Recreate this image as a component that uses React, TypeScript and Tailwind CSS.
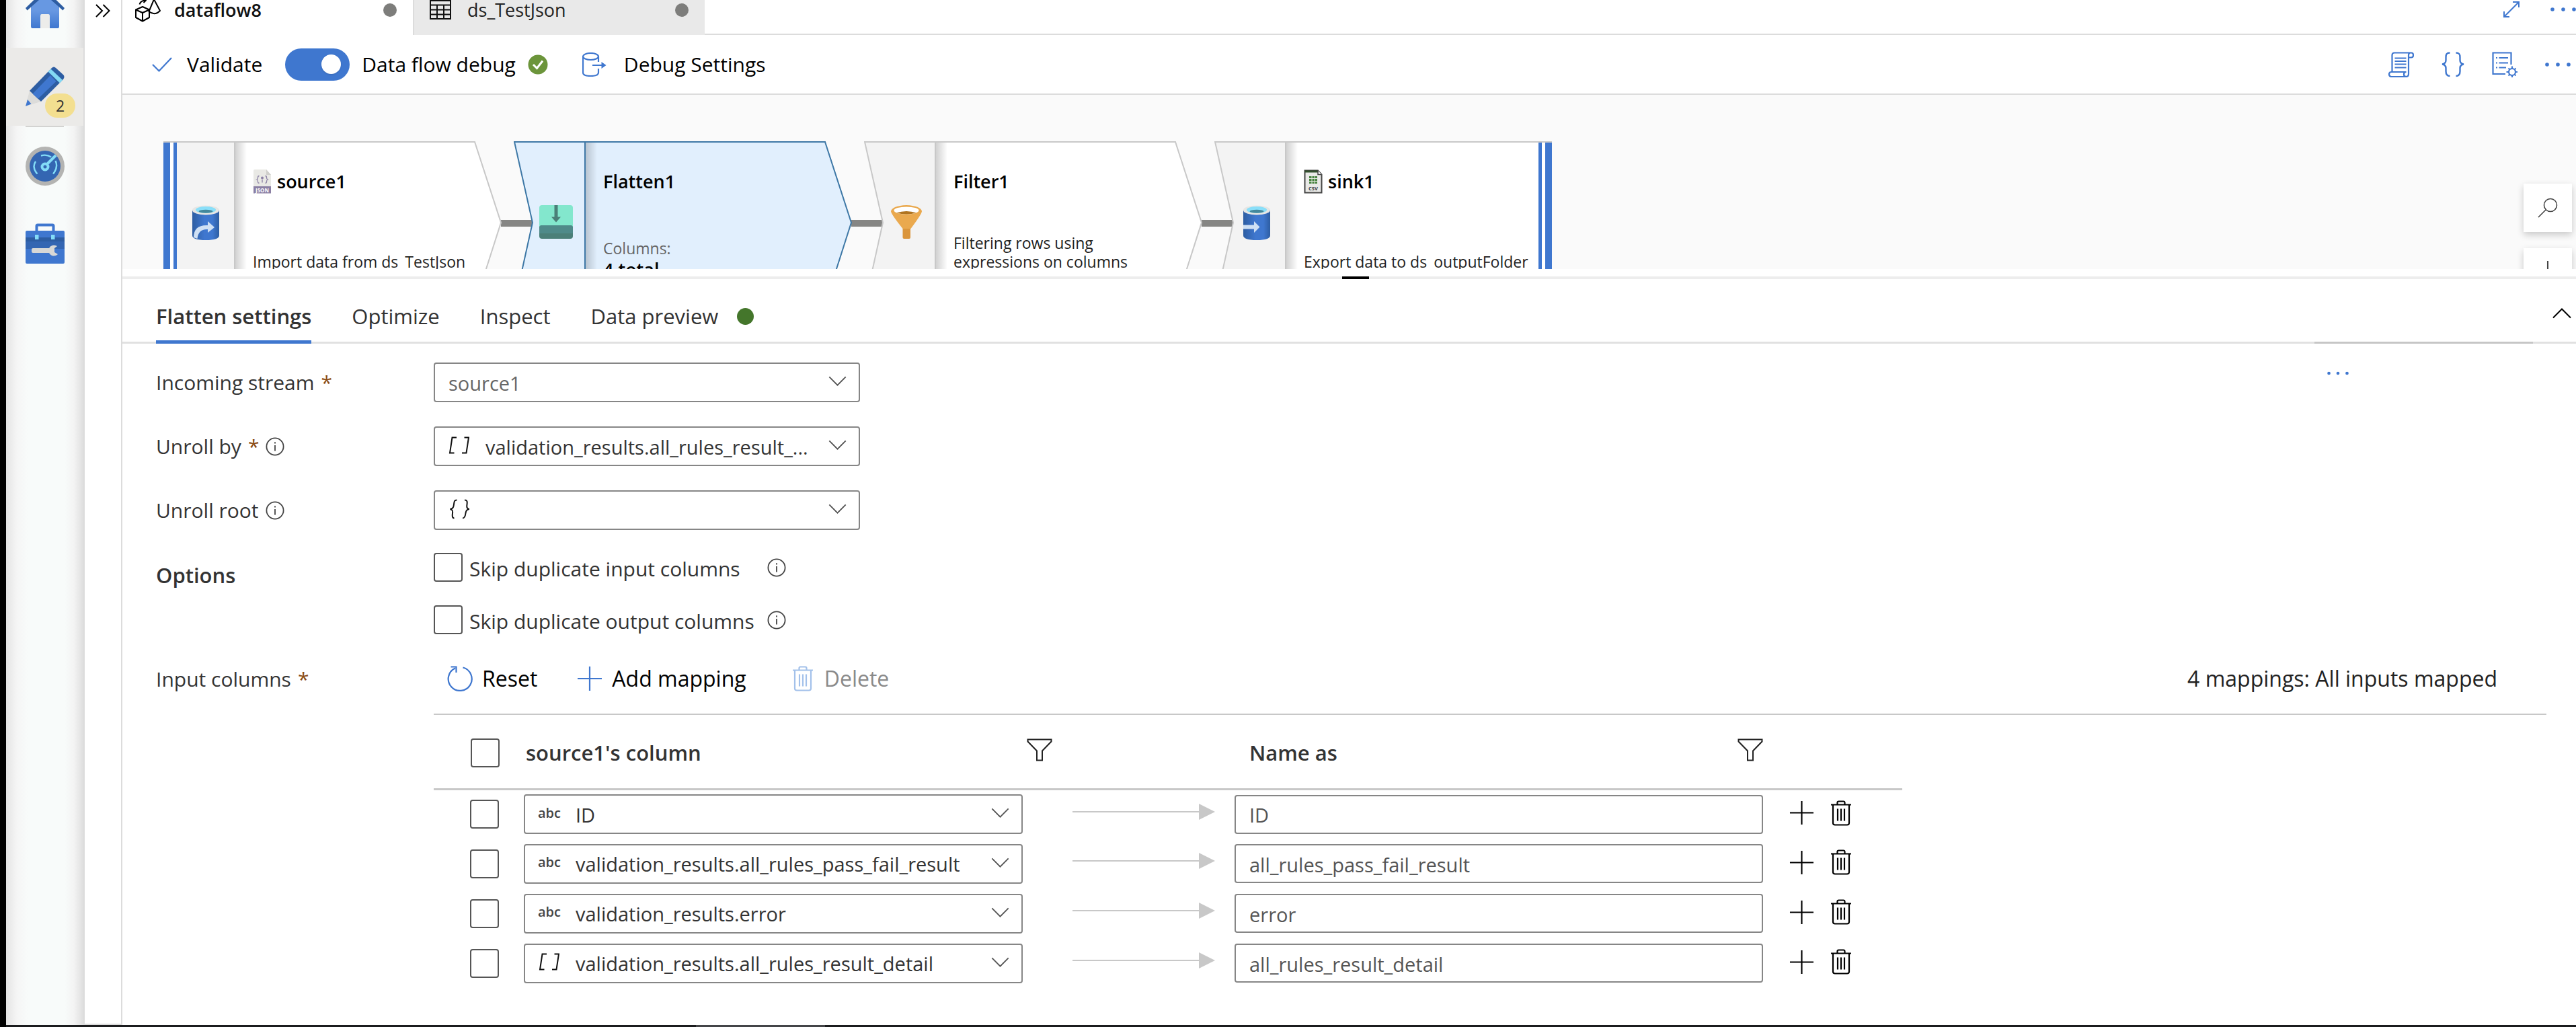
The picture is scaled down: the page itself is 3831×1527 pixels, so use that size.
import React from "react";

type IconProps = { className?: string };

/* ---------- line icons ---------- */

const Dots = ({ className = "w-[38px] h-2" }: IconProps) => (
  <svg viewBox="0 0 38 8" className={className} fill="#3f77cf" aria-hidden>
    <circle cx="3" cy="4" r="2.8" />
    <circle cx="19" cy="4" r="2.8" />
    <circle cx="35" cy="4" r="2.8" />
  </svg>
);

const Chevron = ({ className = "" }: IconProps) => (
  <svg viewBox="0 0 28 16" className={className} fill="none" stroke="currentColor" strokeWidth="2" aria-hidden>
    <path d="M1 1.5 14 14.5 27 1.5" />
  </svg>
);

const Info = () => (
  <svg viewBox="0 0 28 28" className="h-7 w-7 shrink-0" fill="none" stroke="#444" strokeWidth="1.8" aria-hidden>
    <circle cx="14" cy="14" r="12.6" />
    <path d="M14 12v8.5M14 7.2v2.4" />
  </svg>
);

const Plus = ({ className = "" }: IconProps) => (
  <svg viewBox="0 0 38 38" className={className} fill="none" stroke="currentColor" strokeWidth="2.2" aria-hidden>
    <path d="M19 1v36M1 19h36" />
  </svg>
);

const Trash = ({ className = "" }: IconProps) => (
  <svg viewBox="0 0 32 38" className={className} fill="none" stroke="currentColor" strokeWidth="2.2" aria-hidden>
    <path d="M1 6.5h30M10.500 6V3.500Q10.500 1.500 12.500 1.500h7Q21.500 1.500 21.500 3.500V6M4 6.500V33.500Q4 36.500 7 36.500H25Q28 36.500 28 33.500V6.500M11 12.500v18M16 12.500v18M21 12.500v18" />
  </svg>
);

const Funnel = () => (
  <svg viewBox="0 0 38 34" className="h-[34px] w-[38px]" fill="none" stroke="#222" strokeWidth="2" aria-hidden>
    <path d="M1.500 1.500H36.500V4.500L23 18.500V32.500H15V18.500L1.500 4.500Z" />
  </svg>
);

const Brackets = () => (
  <svg viewBox="0 0 32 26" className="h-[26px] w-8" fill="none" stroke="#111" strokeWidth="2" aria-hidden>
    <path d="M13 1.500H6.500L3 24.500H9.500M24.500 1.500H31L27.500 24.500H21" />
  </svg>
);

const BracesItalic = () => (
  <svg viewBox="0 0 32 30" className="h-[30px] w-8" fill="none" stroke="#111" strokeWidth="2" aria-hidden>
    <path d="M13.500 1.500C9.500 1.500 9.500 4 9 8 8.500 12 8 14 3.500 15 7.500 16 7.500 18 7 21 6.500 25 6.500 28.500 9.500 28.500M25 1.500C29 1.500 29 4 28.500 8 28 12 28 14 31.500 15 27.500 16 27 18 26.500 21 26 25 25 28.500 22 28.500" />
  </svg>
);

const Braces = () => (
  <svg viewBox="0 0 34 38" className="h-[38px] w-[34px]" fill="none" stroke="#3f77cf" strokeWidth="2.4" aria-hidden>
    <path d="M12.500 1.500C7.500 1.500 6.500 4 6.500 8v4.500C6.500 16 5 18 1 18.500 5 19 6.500 21 6.500 24.500V29C6.500 33 7.500 36 12.500 36M21.500 1.500C26.500 1.500 27.500 4 27.500 8v4.500C27.500 16 29 18 33 18.500 29 19 27.500 21 27.500 24.500V29C27.500 33 26.500 36 21.500 36" />
  </svg>
);

const Script = () => (
  <svg viewBox="0 0 38 38" className="h-[38px] w-[38px]" fill="none" stroke="#3f77cf" strokeWidth="2.2" aria-hidden>
    <path d="M5.500 29V5Q5.500 1.500 9 1.500H34Q37 1.500 37 5T34 8.500H30V5Q30 1.500 33 1.500M30 8V33Q30 37 26 37H4.500Q1 37 1 33.500T4.500 30H26.500Q23 30 23 33.500T26.500 37" />
    <path d="M9.500 9.500h17M9.500 14h17M9.500 18.500h17M9.500 23.500h17" strokeWidth="2" />
  </svg>
);

const ListGear = () => (
  <svg viewBox="0 0 38 38" className="h-[38px] w-[38px]" fill="none" stroke="#3f77cf" strokeWidth="2.2" aria-hidden>
    <path d="M20 33H1.500V1.500H28.500V19M10.500 9H24M10.500 16.500H24M10.500 23.500H21M6 9h2M6 16.500h2M6 23.500h2" />
    <circle cx="30" cy="30" r="5" />
    <path d="M30 25V21.500M30 35v3M25 30h-3.500M35 30h3M26.500 26.500l-2-2M33.500 26.500l2-2M26.500 33.500l-2 2M33.500 33.500l2 2" />
  </svg>
);

const ResetIcon = () => (
  <svg viewBox="0 0 38 38" className="h-[38px] w-[38px]" fill="none" stroke="#3f77cf" strokeWidth="2.2" aria-hidden>
    <path d="M23.500 2.500A17.500 17.500 0 1 1 12 3.500M5.500 1.500H13.500V10" />
  </svg>
);

const DebugDb = () => (
  <svg viewBox="0 0 36 36" className="h-9 w-9" fill="none" stroke="#3f77cf" strokeWidth="2.2" aria-hidden>
    <ellipse cx="12.500" cy="6" rx="11.500" ry="5" />
    <path d="M1 6V30Q1 35 12.500 35T24 30V24M24 6V14M15 19H30" />
    <path d="M28.500 14 35.500 19 28.500 24Z" fill="#3f77cf" stroke="none" />
  </svg>
);

const DataflowIcon = () => (
  <svg viewBox="0 0 40 36" className="h-9 w-10" fill="none" stroke="#000" strokeWidth="2" strokeLinejoin="round" aria-hidden>
    <path d="M12 13 22 17.500V29L12 34.500 2 29V17.500ZM2 17.500 12 22 22 17.500M12 22V34.500M7.500 9.500Q9 4 16 3.500M13 .5 17 3.500 13.500 7M29 2 21.500 20Q30 27 38 19Z" />
  </svg>
);

const TableIcon = () => (
  <svg viewBox="0 0 32 30" className="h-[30px] w-8" fill="none" stroke="#111" strokeWidth="2" aria-hidden>
    <path d="M1 1H31V28H1ZM1 7.500H31M1 14.500H31M1 21.500H31M11 7.500V28M21 7.500V28" />
  </svg>
);

/* ---------- colour icons ---------- */

const Home = () => (
  <svg viewBox="0 0 60 60" className="h-[60px] w-[60px] shrink-0" aria-hidden>
    <defs>
      <linearGradient id="home" x1="0" y1="0" x2="0" y2="1">
        <stop offset=".5" stopColor="#6798e2" />
        <stop offset="1" stopColor="#3f77cf" />
      </linearGradient>
    </defs>
    <path d="M9 28 30 8 51 28V57Q51 60 49 60H11Q9 60 9 57Z" fill="url(#home)" />
    <path d="M30 2 59 30 56.500 33.500 30 10 3.500 33.500 1 30Z" fill="#2d5da2" />
    <path d="M23 42Q23 39 25 39H35Q37 39 37 42V60H23Z" fill="#ececea" />
  </svg>
);

const Pencil = () => (
  <svg viewBox="0 0 60 60" className="h-[60px] w-[60px]" aria-hidden>
    <path d="M7 37 24 53 1 60Z" fill="#dcdcda" />
    <path d="M4 50 9.500 56.500 1 60Z" fill="#3f77cf" />
    <path d="M7 37 40 3Q43 0 46 3L57 13Q60 16 57 20L24 53Z" fill="#2d5da2" />
    <path d="M11.500 41.500 38 14 46.500 23 19.500 49Z" fill="#3f77cf" />
    <path d="M34.500 8.500 38.500 4.500 56 21 52 25.500Z" fill="#83d9f4" />
  </svg>
);

const Gauge = () => (
  <svg viewBox="0 0 60 60" className="h-[60px] w-[60px]" aria-hidden>
    <circle cx="30" cy="30" r="29" fill="#b4b4b2" />
    <circle cx="30" cy="30" r="23" fill="#3466b2" />
    <g fill="none" stroke="#83dcf7">
      <path d="M16 23Q10 32 18.500 41.500M24 14.500Q32 12 39 16.500M45.500 22Q50 32 42 41.500" strokeWidth="2.400" />
      <path d="M33 27 46 14" strokeWidth="4" />
      <circle cx="30" cy="31" r="4.500" strokeWidth="4" />
    </g>
  </svg>
);

const Toolbox = () => (
  <svg viewBox="0 0 60 60" className="h-[60px] w-[60px]" aria-hidden>
    <path d="M17.500 12V4Q17.500 2.500 19 2.500H41Q42.500 2.500 42.500 4V12" fill="none" stroke="#3f77cf" strokeWidth="4" />
    <rect x="1" y="11" width="58" height="49" rx="2" fill="#3f77cf" />
    <rect x="1" y="21" width="58" height="17" fill="#2d5da2" />
    <rect x="1" y="27" width="58" height="11" fill="#3466b2" />
    <path d="M15 17h5.500v7H15ZM39 17h5.500v7H39Z" fill="#83dcf7" />
    <path d="M12 37H36A8 8 0 0 1 48 34L44 37V43L49 46A8 8 0 0 1 36 44H12Q10 44 10 42V39Q10 37 12 37Z" fill="#d8d8d6" />
  </svg>
);

const Cylinder = ({ kind }: { kind: "in" | "out" }) => (
  <svg viewBox="0 0 40 52" className="h-[52px] w-10" aria-hidden>
    <defs>
      <linearGradient id={"cyl-" + kind}>
        <stop offset="0" stopColor="#2d5da2" />
        <stop offset=".45" stopColor="#3f77cf" />
        <stop offset=".75" stopColor="#3f77cf" />
        <stop offset="1" stopColor="#2d5da2" />
      </linearGradient>
    </defs>
    <path d="M0 7V45Q0 52 20 52T40 45V7Z" fill={"url(#cyl-" + kind + ")"} />
    <ellipse cx="20" cy="7.500" rx="20" ry="7" fill="#e6e6e4" />
    <ellipse cx="20" cy="7" rx="15" ry="5" fill="#8adff9" />
    <ellipse cx="20" cy="9.300" rx="10.500" ry="2.500" fill="#44889c" />
    {kind === "in" ? (
      <path d="M2 48Q2 29 23 30V24L33 33 23 41V36Q9 35 7.500 50Z" fill="#cfe0f4" />
    ) : (
      <path d="M0 29.500H16V24L24.500 32.500 16 41V35.500H0Z" fill="#cfe0f4" />
    )}
  </svg>
);

const FlattenIcon = () => (
  <svg viewBox="0 0 50 50" className="h-[50px] w-[50px]" aria-hidden>
    <rect x="0" y="0" width="50" height="46" rx="4" fill="#83e7cd" />
    <rect x="0" y="30" width="50" height="20" rx="4" fill="#4b7f78" />
    <path d="M0 42V34Q0 30 4 30H46Q50 30 50 34V42Z" fill="#4f8a89" />
    <path d="M22.500 0H27.500V17.500H32L25 25.500 18 17.500H22.500Z" fill="#4b7f78" />
  </svg>
);

const FilterColor = () => (
  <svg viewBox="0 0 46 50" className="h-[50px] w-[46px]" aria-hidden>
    <path d="M0 9Q2 1 23 0 44 1 46 9 46 13 29.500 35H17.500Q0 13 0 9Z" fill="#eaa94e" />
    <path d="M17.500 35H29V48Q29 50 27 50H19.500Q17.500 50 17.500 48Z" fill="#da953c" />
    <ellipse cx="23" cy="8" rx="18.500" ry="5.500" fill="#fff" />
    <path d="M8 11.500Q23 6.500 38 11.500 23 15.500 8 11.500Z" fill="#b1741f" />
  </svg>
);

const JsonFile = () => (
  <svg viewBox="0 0 28 36" className="h-9 w-7" aria-hidden>
    <path d="M1 2Q1 0 3 0H20L27 8V35H1Z" fill="#e9e9e5" />
    <path d="M20 0 27 8H20Z" fill="#cfcfcb" />
    <rect x="1" y="25" width="26" height="10.500" fill="#8b80a4" />
    <path d="M9.500 9.500Q7.500 9.500 7.500 12T6 15Q7.500 15.500 7.500 18T9.500 20M18.500 9.500Q20.500 9.500 20.500 12T22 15Q20.500 15.500 20.500 18T18.500 20M14 15v4.500" fill="none" stroke="#8b80a4" strokeWidth="1.300" />
    <circle cx="14" cy="12.500" r="2" fill="#8b80a4" />
    <text x="14" y="33.500" textAnchor="middle" fontSize="8" fontWeight="700" fill="#fff" fontFamily="Open Sans, sans-serif">JSON</text>
  </svg>
);

const CsvFile = () => (
  <svg viewBox="0 0 28 36" className="h-9 w-7" aria-hidden>
    <path d="M1.500 1.500H21L26.500 7.500V34.500H1.500Z" fill="#e9e9e7" stroke="#454545" strokeWidth="2" />
    <path d="M1.500 1.500H21V4.500H1.500Z" fill="#32502d" />
    <path d="M21 1.500V7.500H26.500" fill="#fff" stroke="#454545" strokeWidth="1.500" />
    <rect x="8" y="10" width="12" height="11" fill="#47823f" />
    <path d="M8 13.500H20M8 17.500H20M12 10V21M16 10V21" stroke="#dfe6dc" strokeWidth="1" />
    <text x="14" y="31" textAnchor="middle" fontSize="7.500" fontWeight="700" fill="#333" fontFamily="Open Sans, sans-serif">CSV</text>
  </svg>
);

/* ---------- graph nodes ---------- */

type Shape = "source" | "step" | "sink";

function NodeShape({ shape, active }: { shape: Shape; active?: boolean }) {
  const line = active ? "#3e78a6" : "#c8c8c8";
  const side = active ? "#e1effd" : "#f3f3f3";
  const body = active ? "#e1effd" : "#ffffff";
  const left = shape === "source" ? "M106 1H1V243H106" : "M106 1H1L28 121 1 243H106";
  const right = shape === "sink" ? "M106 1H501V243H106Z" : "M106 1H463L502 121 463 243H106Z";
  const grad = active ? "shade-active" : "shade-" + shape;
  return (
    <svg viewBox="0 0 504 244" className="absolute inset-0 h-[244px] w-[504px]" aria-hidden>
      <defs>
        <linearGradient id={grad}>
          <stop offset="0" stopColor="#000" stopOpacity=".18" />
          <stop offset="1" stopColor="#000" stopOpacity="0" />
        </linearGradient>
      </defs>
      <path d={left} fill={side} stroke={line} strokeWidth="2" />
      <path d={right} fill={body} stroke={line} strokeWidth="2" />
      <rect x="107" y="2" width="17" height="240" fill={"url(#" + grad + ")"} />
      {shape === "source" && <path d="M0 2H10V243H0ZM15 2H20V243H15Z" fill="#3f77cf" />}
      {shape === "source" && <path d="M10 2H15V243H10Z" fill="#fff" />}
      {shape === "sink" && <path d="M482 2H487V243H482ZM492 2H502V243H492Z" fill="#3f77cf" />}
    </svg>
  );
}

type NodeProps = {
  place: string;
  shape: Shape;
  active?: boolean;
  icon: React.ReactNode;
  file?: React.ReactNode;
  title: string;
  children: React.ReactNode;
};

function GraphNode({ place, shape, active, icon, file, title, children }: NodeProps) {
  return (
    <article className={"absolute top-[69px] flex h-[244px] w-[504px] " + place}>
      <NodeShape shape={shape} active={active} />
      <div className="relative flex w-[106px] justify-end pr-[18px] pt-[95px]">
        <div className="flex w-[50px] justify-center">{icon}</div>
      </div>
      <div className="relative pl-[27px] pt-[38px]">
        <h3 className="flex h-11 items-center gap-2 text-[27px] font-semibold text-black">
          {file}
          {title}
        </h3>
        <div className="whitespace-pre-line pt-[55px] text-[23px] leading-7 text-[#222]">{children}</div>
      </div>
    </article>
  );
}

/* ---------- form pieces ---------- */

const BOX = "rounded border-2 border-[#868686] bg-white outline-none";

function Dropdown({ id, label, value, prefix, muted }: { id: string; label?: string; value: string; prefix?: React.ReactNode; muted?: boolean }) {
  return (
    <div className="relative w-full max-w-[742px]">
      <select
        id={id}
        aria-label={label}
        className={
          "block h-[59px] w-full appearance-none pt-0.5 text-[29px] " + BOX + (prefix ? " pl-[75px]" : " pl-5") + (muted ? " text-[#666]" : " text-[#333]")
        }
      >
        <option>{value}</option>
      </select>
      {prefix && <span className="pointer-events-none absolute inset-y-0 left-[21px] flex items-center pb-1">{prefix}</span>}
      <Chevron className="pointer-events-none absolute right-5 top-[20px] h-[15px] w-[27px] text-[#555]" />
    </div>
  );
}

const Check = ({ id, label }: { id: string; label?: string }) => (
  <input
    id={id}
    type="checkbox"
    aria-label={label}
    className="block h-[43px] w-[43px] shrink-0 appearance-none rounded border-2 border-[#555] bg-white"
  />
);

const Star = () => <span className="text-[#8a4b12]">*</span>;

const Abc = () => <span className="text-[20px] font-semibold leading-6 text-[#444]">abc</span>;

const mappings = [
  { column: "ID", name: "ID", type: "abc" },
  { column: "validation_results.all_rules_pass_fail_result", name: "all_rules_pass_fail_result", type: "abc" },
  { column: "validation_results.error", name: "error", type: "abc" },
  { column: "validation_results.all_rules_result_detail", name: "all_rules_result_detail", type: "array" },
];

function MappingTable() {
  return (
    <table className="w-full max-w-[2184px] table-fixed border-collapse text-left">
      <colgroup>
        <col className="w-[134px]" />
        <col className="w-[742px]" />
        <col className="w-[315px]" />
        <col className="w-[786px]" />
        <col />
      </colgroup>
      <thead>
        <tr className="h-[110px] border-b-[3px] border-[#c8c8c8] text-[31px]">
          <th className="pl-[55px] pt-1 font-normal">
            <Check id="all" label="Select all mappings" />
          </th>
          <th colSpan={2} className="pt-1 font-semibold">
            <div className="flex max-w-[786px] items-center justify-between pl-[3px]">
              source1's column
              <button aria-label="Filter source columns" className="pb-2"><Funnel /></button>
            </div>
          </th>
          <th className="pt-1 font-semibold">
            <div className="flex items-center justify-between pl-[22px]">
              Name as
              <button aria-label="Filter names" className="pb-2"><Funnel /></button>
            </div>
          </th>
          <th aria-label="Actions" />
        </tr>
      </thead>
      <tbody>
        {mappings.map((m, i) => (
          <tr key={m.column} className="h-[74px]">
            <td className="pl-[54px]">
              <Check id={"row" + i} label={"Select " + m.column} />
            </td>
            <td>
              <Dropdown id={"col" + i} label="Source column" value={m.column} prefix={m.type === "abc" ? <Abc /> : <Brackets />} />
            </td>
            <td>
              <svg viewBox="0 0 212 34" className="ml-[74px] h-[34px] w-[212px]" aria-hidden>
                <path d="M0 12H190V14H0ZM188 1 212 13 188 25Z" fill="#c8c8c8" />
              </svg>
            </td>
            <td>
              <input
                aria-label="Name as"
                defaultValue={m.name}
                className={"block h-[58px] w-full px-5 pt-0.5 text-[29px] text-[#555] " + BOX}
              />
            </td>
            <td>
              <div className="flex items-center gap-6 pb-1 pl-[39px] text-black">
                <button aria-label="Add mapping below"><Plus className="h-[37px] w-[37px]" /></button>
                <button aria-label="Delete mapping"><Trash className="h-[38px] w-8" /></button>
              </div>
            </td>
          </tr>
        ))}
      </tbody>
    </table>
  );
}

/* ---------- page regions ---------- */

function Sidebar() {
  return (
    <nav className="flex w-[117px] shrink-0 flex-col border-r-2 border-[#dcdcdc] bg-[#f8fbfa] bg-[linear-gradient(to_right,#e4e4e4,#f5f5f5_14%,#f8fbfa_28%,#f8fbfa_76%,#f3f3f3_88%,#dedede)]">
      <a href="#home" aria-label="Home" className="flex h-[71px] flex-col justify-end pb-[29px] pl-[28px]"><Home /></a>
      <a href="#author" aria-label="Author" className="relative flex h-[116px] items-center bg-[#ebeae8] pb-0.5 pl-[28px]">
        <Pencil />
        <span className="absolute bottom-3 right-3 flex h-9 w-[45px] items-center justify-center rounded-full bg-[#f3df90] text-[23px] text-[#333]">2</span>
      </a>
      <hr className="ml-[29px] w-[57px] border-t-2 border-[#d3d3d1]" />
      <a href="#monitor" aria-label="Monitor" className="flex h-[115px] items-center pl-[28px]"><Gauge /></a>
      <a href="#manage" aria-label="Manage" className="flex h-[115px] items-center pl-[28px]"><Toolbox /></a>
    </nav>
  );
}

function FileTabs() {
  return (
    <div className="flex h-[52px]" role="tablist">
      <button role="tab" aria-selected="true" className="flex h-[30px] w-[432px] items-center pl-[18px] font-semibold text-[#111]">
        <DataflowIcon />
        <span className="pl-[19px] text-[27px] leading-8">dataflow8</span>
        <span className="ml-auto mr-6 h-5 w-5 rounded-full bg-[#7d7d7b]" />
      </button>
      <button role="tab" aria-selected="false" className="flex w-[434px] border-l-2 border-[#dcdcdc] bg-[#e9e9e9] pl-[23px] text-[#222]">
        <span className="flex h-[30px] w-full items-center">
          <TableIcon />
          <span className="pl-6 text-[27px] leading-8">ds_TestJson</span>
          <span className="ml-auto mr-6 h-5 w-5 rounded-full bg-[#7d7d7b]" />
        </span>
      </button>
      <div className="flex flex-1 justify-end border-b-2 border-[#dcdcdc]">
        <div className="flex h-7 items-center gap-[45px]">
          <button aria-label="Expand">
            <svg viewBox="0 0 26 26" className="h-[26px] w-[26px]" fill="none" stroke="#3f77cf" strokeWidth="2" aria-hidden>
              <path d="M2 24 24 2M15 2H24V10M2 16V24H10" />
            </svg>
          </button>
          <button aria-label="More"><Dots /></button>
        </div>
      </div>
    </div>
  );
}

function Toolbar() {
  return (
    <div className="flex h-[89px] items-center border-b-2 border-[#dcdcdc] pl-11 text-[30px] text-black">
      <button className="flex items-center gap-[22px]">
        <svg viewBox="0 0 30 22" className="h-[22px] w-[30px]" fill="none" stroke="#3f77cf" strokeWidth="2.2" aria-hidden>
          <path d="M1 11 10.500 20.500 29 1" />
        </svg>
        Validate
      </button>
      <label className="ml-[34px] flex items-center gap-[18px]">
        <input type="checkbox" role="switch" defaultChecked className="peer sr-only" />
        <span className="flex h-12 w-24 items-center justify-end rounded-full bg-[#3f77cf] pr-[13px]">
          <span className="h-[29px] w-[29px] rounded-full bg-white shadow" />
        </span>
        Data flow debug
      </label>
      <svg viewBox="0 0 30 30" className="ml-[18px] h-[30px] w-[30px]" aria-hidden>
        <circle cx="15" cy="15" r="14.500" fill="#6c953b" />
        <path d="M8 15 13.500 20.500 22 9.500" fill="none" stroke="#fff" strokeWidth="3" />
      </svg>
      <button className="ml-[51px] flex items-center gap-[26px]">
        <DebugDb />
        Debug Settings
      </button>
      <div className="ml-auto flex items-center gap-[41px]">
        <button aria-label="Script"><Script /></button>
        <button aria-label="Code"><Braces /></button>
        <button aria-label="Properties"><ListGear /></button>
        <button aria-label="More" className="mr-2"><Dots /></button>
      </div>
    </div>
  );
}

function Canvas() {
  return (
    <div className="relative h-[259px] overflow-hidden bg-[#fafafa]">
      <i className="absolute left-[563px] top-[186px] h-[10px] w-[46px] bg-[#868684]" />
      <i className="absolute left-[1084px] top-[186px] h-[10px] w-[46px] bg-[#868684]" />
      <i className="absolute left-[1605px] top-[186px] h-[10px] w-[46px] bg-[#868684]" />
      <GraphNode place="left-[61px]" shape="source" icon={<Cylinder kind="in" />} file={<JsonFile />} title="source1">
        {"\nImport data from ds_TestJson"}
      </GraphNode>
      <GraphNode place="left-[582px]" shape="step" active icon={<FlattenIcon />} title="Flatten1">
        <p className="pt-2 text-[#666]">Columns:</p>
        <p className="text-[27px] font-semibold leading-9 text-black">4 total</p>
      </GraphNode>
      <GraphNode place="left-[1103px]" shape="step" icon={<FilterColor />} title="Filter1">
        {"Filtering rows using\nexpressions on columns"}
      </GraphNode>
      <GraphNode place="left-[1624px]" shape="sink" icon={<Cylinder kind="out" />} file={<CsvFile />} title="sink1">
        {"\nExport data to ds_outputFolder"}
      </GraphNode>
      <div className="absolute right-1.5 top-[132px] flex flex-col gap-6">
        <button aria-label="Search" className="flex h-[72px] w-[72px] items-center justify-center bg-white shadow-[0_4px_10px_rgba(0,0,0,0.2)]">
          <svg viewBox="0 0 30 30" className="h-[30px] w-[30px]" fill="none" stroke="#444" strokeWidth="1.600" aria-hidden>
            <circle cx="19" cy="11" r="9.500" />
            <path d="M12 18 1 29" />
          </svg>
        </button>
        <button aria-label="Zoom in" className="flex h-[72px] w-[72px] items-center justify-center bg-white text-[#444] shadow-[0_4px_10px_rgba(0,0,0,0.2)]">
          <Plus className="h-9 w-9" />
        </button>
      </div>
    </div>
  );
}

function PanelTabs() {
  return (
    <div className="relative flex h-24 items-end border-b-[3px] border-[#e1e1e1] pl-[50px] text-[31px] text-[#333]" role="tablist">
      <button role="tab" aria-selected="true" className="-mb-[3px] h-[68px] border-b-[5px] border-[#3f77cf] pb-2 font-semibold">
        Flatten settings
      </button>
      <button role="tab" aria-selected="false" className="ml-[60px] h-[65px] pb-2.5">Optimize</button>
      <button role="tab" aria-selected="false" className="ml-[60px] h-[65px] pb-2.5">Inspect</button>
      <button role="tab" aria-selected="false" className="ml-[60px] flex h-[65px] items-center gap-7 pb-2.5">
        Data preview
        <span className="h-[25px] w-[25px] rounded-full bg-[#44762b]" />
      </button>
      <button aria-label="Collapse panel" className="mb-[34px] ml-auto mr-[7px]">
        <Chevron className="h-4 w-7 rotate-180 text-black" />
      </button>
      <span className="absolute -bottom-[3px] right-16 h-[3px] w-[325px] bg-[#c6c6c6]" />
    </div>
  );
}

function Settings() {
  const label = "flex h-[59px] items-center gap-2.5 font-medium";
  return (
    <div className="grid grid-cols-[413px_1fr] pl-[50px] pr-11 pt-7 text-[30px] text-[#333]">
      <label htmlFor="stream" className={label}>Incoming stream <Star /></label>
      <div className="mb-9 flex">
        <div className="w-[634px]"><Dropdown id="stream" value="source1" muted /></div>
        <button aria-label="More options" className="ml-auto mr-[294px] flex h-8 items-center"><Dots className="h-2 w-8" /></button>
      </div>
      <label htmlFor="unroll" className={label}>Unroll by <Star /> <Info /></label>
      <div className="mb-9 w-[634px]"><Dropdown id="unroll" value="validation_results.all_rules_result_..." prefix={<Brackets />} /></div>
      <label htmlFor="root" className={label}>Unroll root <Info /></label>
      <div className="mb-[34px] w-[634px]"><Dropdown id="root" value="" prefix={<BracesItalic />} /></div>
      <div className="pt-2.5 text-[31px] font-semibold">Options</div>
      <div className="flex flex-col gap-[35px]">
        <div className="flex h-[43px] w-[524px] items-center gap-[10px]">
          <Check id="skipIn" />
          <label htmlFor="skipIn" className="mr-auto pt-1">Skip duplicate input columns</label>
          <Info />
        </div>
        <div className="flex h-[43px] w-[524px] items-center gap-[10px]">
          <Check id="skipOut" />
          <label htmlFor="skipOut" className="mr-auto pt-1">Skip duplicate output columns</label>
          <Info />
        </div>
      </div>
      <div className="mt-[30px] flex h-[72px] items-center gap-2.5 font-medium">Input columns <Star /></div>
      <div className="mt-[30px] flex h-[72px] items-center pl-5 text-[32px] text-black">
        <button className="flex items-center gap-[14px]"><ResetIcon />Reset</button>
        <button className="ml-[59px] flex items-center gap-[14px]"><Plus className="h-[38px] w-[38px] text-[#3f77cf]" />Add mapping</button>
        <button disabled className="ml-[68px] flex items-center gap-[16px] text-[#8a8a8a]"><Trash className="h-[38px] w-8 text-[#a3c1ea]" />Delete</button>
        <span className="ml-auto pr-[73px] text-[#222]">4 mappings: All inputs mapped</span>
      </div>
      <div />
      <div className="mt-4 border-t-2 border-[#c8c8c8]"><MappingTable /></div>
    </div>
  );
}

export default function App() {
  return (
    <div className="flex min-h-screen flex-col bg-white font-['Open_Sans','Noto_Sans',sans-serif]">
      <div className="flex flex-1">
        <div className="w-[9px] shrink-0 bg-black" />
        <Sidebar />
        <div className="w-14 shrink-0 border-b-2 border-r-2 border-[#dcdcdc]">
          <button aria-label="Expand pane" className="ml-4 mt-1.5 block">
            <svg viewBox="0 0 22 20" className="h-5 w-[22px]" fill="none" stroke="#000" strokeWidth="2" aria-hidden>
              <path d="M1 1 10 10 1 19M11.500 1 20.500 10 11.500 19" />
            </svg>
          </button>
        </div>
        <main className="min-w-0 flex-1">
          <FileTabs />
          <Toolbar />
          <Canvas />
          <div className="relative mt-[11px] h-1 bg-[#ededed]">
            <i className="absolute left-[1814px] top-0 h-1 w-10 bg-black" />
          </div>
          <PanelTabs />
          <Settings />
        </main>
      </div>
      <footer className="flex h-[3px] bg-[#1b1c1e]">
        <div className="w-[9px] bg-black" />
        <div className="ml-[1026px] w-48 bg-[#444548]" />
      </footer>
    </div>
  );
}
